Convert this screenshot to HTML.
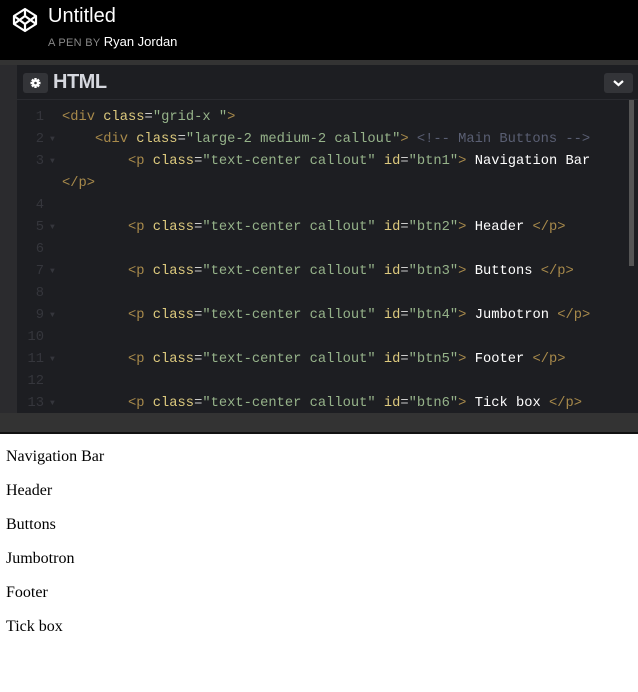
<!DOCTYPE html>
<html><head><style>
*{margin:0;padding:0;box-sizing:border-box}
body{width:638px;height:692px;background:#fff;position:relative;overflow:hidden;font-family:"Liberation Sans",sans-serif}
.hdr{position:absolute;left:0;top:0;width:638px;height:60px;background:#000}
.title{position:absolute;left:48px;top:5px;color:#fff;font-size:20px}
.by{position:absolute;left:48px;top:34px;color:#888;font-size:11px;letter-spacing:.3px}
.by b{color:#fff;font-weight:normal;font-size:13px;letter-spacing:0}
.strip{position:absolute;left:0;top:60px;width:638px;height:5px;background:#333}
.gut{position:absolute;left:0;top:65px;width:17px;height:348px;background:#2b2b2e}
.ed{position:absolute;left:17px;top:65px;width:621px;height:348px;background:#1d1e22;overflow:hidden}
.tb{position:absolute;left:0;top:0;width:621px;height:35px;border-bottom:1px solid #2a2b30}
.gear{position:absolute;left:6px;top:8px;width:25px;height:20px;background:#333438;border-radius:3px}
.ht{position:absolute;left:36px;top:6px;color:#d5d7de;font-weight:bold;font-size:20px;letter-spacing:-.5px}
.dd{position:absolute;left:587px;top:8px;width:29px;height:20px;background:#333438;border-radius:3px}
.sb{position:absolute;left:612px;top:35px;width:5px;height:166px;background:#555}
.code{position:absolute;left:0;top:42px;font-family:"Liberation Mono",monospace;font-size:13.75px;line-height:22px;white-space:pre;color:#fff}
.ln{position:absolute;left:0;width:27px;text-align:right;color:#35363c}
.ar{position:absolute;left:33px;color:#35363c;font-size:8px}
.c{position:absolute;left:45px}
.t{color:#a88a4b}.a{color:#ddca7e}.s{color:#96b38a}.m{color:#5a5f73}.e{color:#ccc}
.bar{position:absolute;left:0;top:413px;width:638px;height:19px;background:#333}
.line{position:absolute;left:0;top:432px;width:638px;height:2px;background:#111}
.out{position:absolute;left:6px;top:440px;font-family:"Liberation Serif",serif;font-size:16px;line-height:34px;color:#000}
</style></head><body>
<div class="hdr">
<svg style="position:absolute;left:12px;top:7px" width="26" height="26" viewBox="0 0 26 26" fill="none" stroke="#fff" stroke-width="2.2" stroke-linejoin="round"><path d="M13 2L24 9V17L13 24L2 17V9Z M13 2V9 M13 17V24 M2 9L13 17L24 9 M2 17L13 9L24 17"/></svg>
<div class="title">Untitled</div>
<div class="by">A PEN BY <b>Ryan Jordan</b></div>
</div>
<div class="strip"></div>
<div class="gut"></div>
<div class="ed">
<div class="tb"><div class="gear"><svg width="25" height="20" viewBox="0 0 25 20"><g fill="#fff"><circle cx="12.5" cy="10" r="3.5"/><rect x="11.3" y="5" width="2.4" height="10"/><rect x="7.5" y="8.8" width="10" height="2.4"/><rect x="11.3" y="5" width="2.4" height="10" transform="rotate(45 12.5 10)"/><rect x="11.3" y="5" width="2.4" height="10" transform="rotate(-45 12.5 10)"/></g><circle cx="12.5" cy="10" r="1.3" fill="#333438"/></svg></div><div class="ht">HTML</div>
<div class="dd"><svg width="29" height="20"><path d="M10 8L14.5 12L19 8" stroke="#fff" stroke-width="2.2" fill="none"/></svg></div></div>
<div class="sb"></div>
<div class="code">
<div class="ln" style="top:0">1</div><div class="c" style="top:0"><span class="t">&lt;div</span> <span class="a">class</span><span class="e">=</span><span class="s">"grid-x "</span><span class="t">&gt;</span></div>
<div class="ln" style="top:22px">2</div><div class="ar" style="top:22px">▼</div><div class="c" style="top:22px">    <span class="t">&lt;div</span> <span class="a">class</span><span class="e">=</span><span class="s">"large-2 medium-2 callout"</span><span class="t">&gt;</span> <span class="m">&lt;!-- Main Buttons --&gt;</span></div>
<div class="ln" style="top:44px">3</div><div class="ar" style="top:44px">▼</div><div class="c" style="top:44px">        <span class="t">&lt;p</span> <span class="a">class</span><span class="e">=</span><span class="s">"text-center callout"</span> <span class="a">id</span><span class="e">=</span><span class="s">"btn1"</span><span class="t">&gt;</span> Navigation Bar</div>
<div class="c" style="top:66px"><span class="t">&lt;/p&gt;</span></div>
<div class="ln" style="top:88px">4</div>
<div class="ln" style="top:110px">5</div><div class="ar" style="top:110px">▼</div><div class="c" style="top:110px">        <span class="t">&lt;p</span> <span class="a">class</span><span class="e">=</span><span class="s">"text-center callout"</span> <span class="a">id</span><span class="e">=</span><span class="s">"btn2"</span><span class="t">&gt;</span> Header <span class="t">&lt;/p&gt;</span></div>
<div class="ln" style="top:132px">6</div>
<div class="ln" style="top:154px">7</div><div class="ar" style="top:154px">▼</div><div class="c" style="top:154px">        <span class="t">&lt;p</span> <span class="a">class</span><span class="e">=</span><span class="s">"text-center callout"</span> <span class="a">id</span><span class="e">=</span><span class="s">"btn3"</span><span class="t">&gt;</span> Buttons <span class="t">&lt;/p&gt;</span></div>
<div class="ln" style="top:176px">8</div>
<div class="ln" style="top:198px">9</div><div class="ar" style="top:198px">▼</div><div class="c" style="top:198px">        <span class="t">&lt;p</span> <span class="a">class</span><span class="e">=</span><span class="s">"text-center callout"</span> <span class="a">id</span><span class="e">=</span><span class="s">"btn4"</span><span class="t">&gt;</span> Jumbotron <span class="t">&lt;/p&gt;</span></div>
<div class="ln" style="top:220px">10</div>
<div class="ln" style="top:242px">11</div><div class="ar" style="top:242px">▼</div><div class="c" style="top:242px">        <span class="t">&lt;p</span> <span class="a">class</span><span class="e">=</span><span class="s">"text-center callout"</span> <span class="a">id</span><span class="e">=</span><span class="s">"btn5"</span><span class="t">&gt;</span> Footer <span class="t">&lt;/p&gt;</span></div>
<div class="ln" style="top:264px">12</div>
<div class="ln" style="top:286px">13</div><div class="ar" style="top:286px">▼</div><div class="c" style="top:286px">        <span class="t">&lt;p</span> <span class="a">class</span><span class="e">=</span><span class="s">"text-center callout"</span> <span class="a">id</span><span class="e">=</span><span class="s">"btn6"</span><span class="t">&gt;</span> Tick box <span class="t">&lt;/p&gt;</span></div>
</div>
</div>
<div class="bar"></div>
<div class="line"></div>
<div class="out">Navigation Bar<br>Header<br>Buttons<br>Jumbotron<br>Footer<br>Tick box</div>
</body></html>
